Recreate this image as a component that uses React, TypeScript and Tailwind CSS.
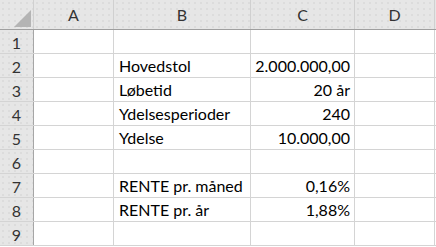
import React from "react";

const cols = [
  { name: "A", w: "w-[80px]" },
  { name: "B", w: "w-[137px]" },
  { name: "C", w: "w-[104px]" },
  { name: "D", w: "w-[80px]" },
];

const rows: [string, string][] = [
  ["", ""],
  ["Hovedstol", "2.000.000,00"],
  ["Løbetid", "20 år"],
  ["Ydelsesperioder", "240"],
  ["Ydelse", "10.000,00"],
  ["", ""],
  ["RENTE pr. måned", "0,16%"],
  ["RENTE pr. år", "1,88%"],
  ["", ""],
];

// grey header with the faint dot texture
const dots =
  "bg-[#e6e6e6] bg-[radial-gradient(circle,#cfcfcf_0.6px,transparent_0.8px)] bg-[length:6px_6px]";

export default function App() {
  return (
    <div
      className="w-[436px] h-[247px] overflow-hidden bg-white text-black"
      style={{ fontFamily: "Lato, 'Noto Sans', sans-serif" }}
    >
      <div className="flex h-[30px] border-b border-[#9f9f9f]">
        <div className={`relative w-[34px] shrink-0 border-r border-[#d0d0d0] ${dots}`}>
          <svg
            className="absolute right-[2px] bottom-[2px]"
            width="17"
            height="17"
            viewBox="0 0 17 17"
          >
            <polygon points="17,0 17,17 0,17" fill="#b4b4b4" />
          </svg>
        </div>
        {cols.map((c) => (
          <div
            key={c.name}
            className={`${c.w} shrink-0 flex items-center justify-center border-r border-[#d0d0d0] pt-[1px] text-[16px] text-[#333] ${dots}`}
          >
            {c.name}
          </div>
        ))}
        <div className={`flex-1 ${dots}`} />
      </div>
      {rows.map(([label, value], i) => (
        <div key={i} className="flex h-[24px] border-b border-[#d4d4d4]">
          <div
            className={`w-[34px] shrink-0 flex items-end justify-center border-r border-[#a6a6a6] pb-[2px] text-[16px] leading-none text-[#333] ${dots}`}
          >
            {i + 1}
          </div>
          <div className="w-[80px] shrink-0 border-r border-[#d4d4d4]" />
          <div className="w-[137px] shrink-0 flex items-end border-r border-[#d4d4d4] pl-[5px] pb-[3px] text-[16px] leading-none whitespace-nowrap">
            {label}
          </div>
          <div className="w-[104px] shrink-0 flex items-end justify-end border-r border-[#d4d4d4] pr-[4px] pb-[3px] text-[16px] leading-none whitespace-nowrap">
            {value}
          </div>
          <div className="w-[80px] shrink-0 border-r border-[#d4d4d4]" />
        </div>
      ))}
    </div>
  );
}
